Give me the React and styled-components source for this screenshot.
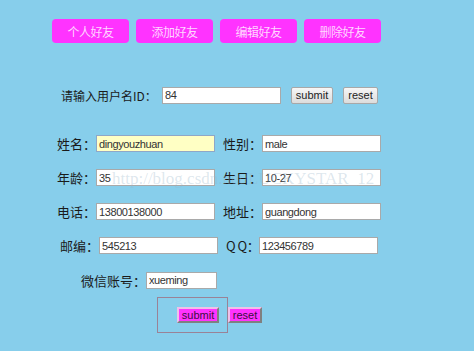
import React from "react";
import styled, { createGlobalStyle } from "styled-components";

const GlobalStyle = createGlobalStyle`
  html, body {
    margin: 0;
    padding: 0;
    background: #87ceeb;
  }
  body {
    font-family: "Noto Sans CJK SC", "Liberation Sans", sans-serif;
  }
`;

const Page = styled.div`
  position: relative;
  width: 474px;
  height: 351px;
  overflow: hidden;
  background: #87ceeb;
  display: flex;
  flex-direction: column;
`;

const Nav = styled.div`
  display: flex;
  gap: 7px;
  margin: 19px 0 0 52px;
`;

const NavButton = styled.button`
  width: 77px;
  height: 24px;
  border: none;
  border-radius: 4px;
  background: #ff33ff;
  color: #ffd6ff;
  font-family: "Noto Sans CJK SC", sans-serif;
  font-size: 12px;
  letter-spacing: -0.5px;
  padding: 0;
`;

const Row = styled.div`
  display: flex;
  align-items: center;
  margin-top: ${({ $top }) => $top}px;
  margin-left: ${({ $left }) => $left}px;
  height: ${({ $h }) => $h || 17}px;
`;

const Label = styled.span`
  width: ${({ $w }) => $w}px;
  flex-shrink: 0;
  font-family: "Noto Sans CJK SC", sans-serif;
  font-size: ${({ $size }) => $size || 13}px;
  color: #1a1a1a;
  white-space: nowrap;
  letter-spacing: ${({ $ls }) => $ls || 0}px;
`;

const Field = styled.input`
  box-sizing: border-box;
  width: ${({ $w }) => $w || 119}px;
  height: ${({ $h }) => $h || 17}px;
  margin: 0 ${({ $gap }) => $gap || 0}px 0 0;
  padding: 0 2px;
  border: 1px solid ${({ $hl }) => ($hl ? "#8fa7c7" : "#a9a9a9")};
  background: ${({ $hl }) => ($hl ? "#ffffc4" : "#ffffff")};
  font-family: "Liberation Sans", sans-serif;
  font-size: 11px;
  letter-spacing: -0.4px;
  color: #333;
  outline: none;
`;

const GrayButton = styled.button`
  box-sizing: border-box;
  width: ${({ $w }) => $w}px;
  height: 17px;
  margin-left: 10px;
  padding: 0;
  border: 1px solid #a8a8a8;
  border-radius: 2px;
  background: linear-gradient(#f6f6f6, #dcdcdc);
  font-family: "Liberation Sans", sans-serif;
  font-size: 11px;
  color: #222;
`;

const SubmitBox = styled.div`
  box-sizing: border-box;
  display: flex;
  align-items: flex-start;
  width: 71px;
  height: 36px;
  padding: 9px 0 0 19px;
  border: 1px solid #9a8296;
`;

const PinkButton = styled.button`
  box-sizing: border-box;
  width: ${({ $w }) => $w}px;
  height: 16px;
  margin-top: ${({ $mt }) => $mt || 0}px;
  padding: 0;
  border: 2px solid;
  border-color: #f0c0e8 #808080 #808080 #f0c0e8;
  background: #ff33ff;
  font-family: "Liberation Sans", sans-serif;
  font-size: 11px;
  line-height: 12px;
  color: #3a1040;
`;

const BottomRow = styled.div`
  display: flex;
  align-items: flex-start;
  margin: 9px 0 0 157px;
`;

const Watermark = styled.div`
  position: absolute;
  left: 112px;
  top: 170px;
  font-family: "Liberation Serif", serif;
  font-size: 17px;
  line-height: 1;
  color: rgba(150, 180, 200, 0.32);
  white-space: nowrap;
  pointer-events: none;
`;

const rows = [
  { top: 32, left: 57, a: ["姓名：", "dingyouzhuan", true], b: ["性别：", "male"] },
  { top: 17, left: 57, a: ["年龄：", "35"], b: ["生日：", "10-27"] },
  { top: 17, left: 57, a: ["电话：", "13800138000"], b: ["地址：", "guangdong"] },
];

export default function App() {
  return (
    <>
      <GlobalStyle />
      <Page>
        <Nav>
          <NavButton>个人好友</NavButton>
          <NavButton>添加好友</NavButton>
          <NavButton>编辑好友</NavButton>
          <NavButton>删除好友</NavButton>
        </Nav>

        <Row $top={44} $left={61} $h={16}>
          <Label $w={101} $size={12}>请输入用户名ID：</Label>
          <Field $h={17} defaultValue="84" />
          <GrayButton $w={42}>submit</GrayButton>
          <GrayButton $w={35}>reset</GrayButton>
        </Row>

        {rows.map((r) => (
          <Row key={r.a[0]} $top={r.top} $left={r.left}>
            <Label $w={39}>{r.a[0]}</Label>
            <Field defaultValue={r.a[1]} $hl={r.a[2]} $gap={8} />
            <Label $w={39}>{r.b[0]}</Label>
            <Field defaultValue={r.b[1]} />
          </Row>
        ))}

        <Row $top={17} $left={60}>
          <Label $w={39}>邮编：</Label>
          <Field defaultValue="545213" $gap={8} />
          <Label $w={33} $ls={-0.5}>Q Q：</Label>
          <Field defaultValue="123456789" />
        </Row>

        <Row $top={18} $left={81} $h={16}>
          <Label $w={65}>微信账号：</Label>
          <Field $w={71} $h={17} defaultValue="xueming" />
        </Row>

        <BottomRow>
          <SubmitBox>
            <PinkButton $w={42}>submit</PinkButton>
          </SubmitBox>
          <PinkButton $w={34} $mt={10}>reset</PinkButton>
        </BottomRow>

        <Watermark>http://blog.csdn.net/LUCKYSTAR_12</Watermark>
      </Page>
    </>
  );
}
